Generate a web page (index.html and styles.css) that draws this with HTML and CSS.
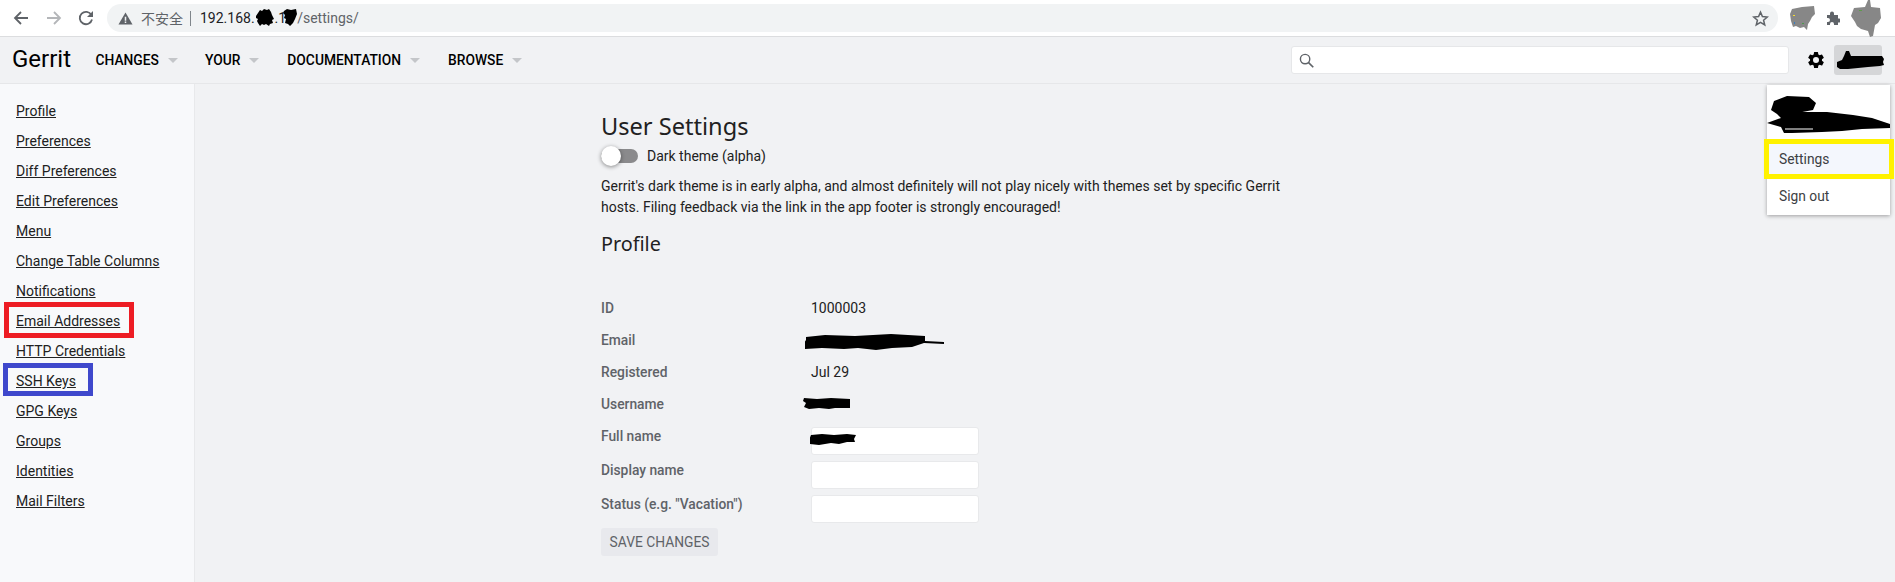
FILE: index.html
```html
<!DOCTYPE html>
<html lang="en">
<head>
<meta charset="utf-8">
<title>Gerrit Settings</title>
<link rel="stylesheet" href="styles.css">
</head>
<body>
<div class="browser-bar">
  <svg class="bicon" viewBox="0 0 16 16"><path d="M15 8H2.500M8 2 2 8l6 6" fill="none" stroke="#5f6368" stroke-width="1.800"/></svg>
  <svg class="bicon fwd" viewBox="0 0 16 16"><path d="M1 8h12.500M8 2l6 6-6 6" fill="none" stroke="#b4b6b9" stroke-width="1.800"/></svg>
  <svg class="bicon reload" viewBox="0 0 16 16"><path d="M13.400 5A6.200 6.200 0 1 0 14 9.500" fill="none" stroke="#5f6368" stroke-width="1.800"/><path d="M15 1v6H9z" fill="#5f6368"/></svg>
  <div class="omnibox">
    <svg class="warn" viewBox="0 0 16 16"><path d="M8 1.500 15.500 14.500H.5z" fill="#5f6368"/><path d="M7.200 6h1.600v4.400H7.200zM7.200 11.200h1.600v1.600H7.200z" fill="#f1f3f4"/></svg>
    <span class="insecure">不安全</span>
    <span class="sep"></span>
    <span class="url">192.168.<svg class="url-blob one" viewBox="0 0 20 20"><path d="M1 8 3 5l2-3 2 1 2-2 3 1 2-1 2 3 1 3 2 4-2 1 1 3-3 1-1 2-3-2-2 1-2-1-2 2-2-3-1-2 1-2-2-1z"/></svg>.1<svg class="url-blob two" viewBox="0 0 14 20"><path d="M1 3 4 1l4 1 5-1 1 5-2 5-2 4-3 3-2-2-3-1 1-4-2-1 1-3-2-2z"/></svg><span class="url-path">/settings/</span></span>
    <svg class="star" viewBox="0 0 16 16"><path d="m8 2 1.800 4.200 4.600.4-3.500 3 1.100 4.500L8 11.700l-4 2.400 1.100-4.500-3.500-3 4.600-.4z" fill="none" stroke="#5f6368" stroke-width="1.400"/></svg>
  </div>
  <svg class="ext-a" viewBox="0 0 25 24"><path d="M2 3 12 1l12-1 1 8-3 3-2 4-2 3-1 6-3-3-4 1-4-2-3 1-2-6-1-7z" fill="#878787"/><path d="M3 9h2v1H3z" fill="#f5dc30"/><path d="M4 16h1v2H4z" fill="#3a7fc0"/><path d="M12 17h2v1h-2z" fill="#4c9a4c"/></svg>
  <svg class="puzzle" viewBox="0 0 14 14"><path d="M1 4h3V2.500a2 2 0 0 1 4 0V4h4v3.500h1a2 2 0 0 1 0 4h-1V14H8v-1a2 2 0 0 0-4 0v1H1v-3h1a2 2 0 0 0 0-4H1z" fill="#5f6368"/></svg>
  <svg class="ext-b" viewBox="0 0 30 37"><path d="M3 8 14 7l3-7h2l1 7 9 1 1 10-3 5-3 2-2 11-3 1-2-6-7-2-4-3-2-4-4-6z" fill="#878787"/><path d="M8 10h3v1H8z" fill="#5e9a4c"/></svg>
</div>

<header class="app-header">
  <span class="logo">Gerrit</span>
  <nav class="main-nav">
    <span class="nav-item changes">CHANGES<i class="caret"></i></span>
    <span class="nav-item your">YOUR<i class="caret"></i></span>
    <span class="nav-item docs">DOCUMENTATION<i class="caret"></i></span>
    <span class="nav-item browse">BROWSE<i class="caret"></i></span>
  </nav>
  <div class="search">
    <svg class="search-icon" viewBox="0 0 16 16"><circle cx="6.500" cy="6.500" r="5" fill="none" stroke="#5f6368" stroke-width="1.500"/><path d="m10.200 10.200 5 5" stroke="#5f6368" stroke-width="1.800"/></svg>
  </div>
  <svg class="gear" viewBox="0 0 24 24"><path d="M19.140 12.940a7.140 7.140 0 0 0 0-1.880l2.030-1.580a.5.5 0 0 0 .12-.61l-1.920-3.320a.5.5 0 0 0-.59-.22l-2.390.96a7 7 0 0 0-1.620-.94l-.36-2.540a.5.500 0 0 0-.48-.41h-3.840a.5.500 0 0 0-.47.410l-.36 2.540a7.200 7.200 0 0 0-1.620.94l-2.390-.96a.5.500 0 0 0-.59.220L2.740 8.870a.5.5 0 0 0 .12.610l2.030 1.580a7.400 7.400 0 0 0 0 1.880l-2.030 1.580a.5.5 0 0 0-.12.610l1.920 3.320c.12.220.37.29.59.22l2.390-.96c.5.380 1.040.7 1.620.94l.36 2.540c.05.240.24.410.47.410h3.840c.24 0 .44-.17.470-.41l.36-2.540a7 7 0 0 0 1.620-.94l2.390.96c.22.080.47 0 .59-.22l1.920-3.320a.5.5 0 0 0-.12-.61zM12 15.600a3.600 3.600 0 1 1 0-7.200 3.600 3.600 0 0 1 0 7.200z" fill="#000"/></svg>
  <div class="avatar-box">
    <svg class="avatar-blob" viewBox="0 0 47 19"><path d="M0 11 5 9l2-4 2-5h3l2 5 15 0 16 0 2 3-1 3 1 3-4 1-12 1-10 1-10 1-8 0-3-2-2-2z"/></svg>
  </div>
</header>

<div class="page">
  <aside class="sidebar">
    <ul class="side-list">
      <li><a>Profile</a></li>
      <li><a>Preferences</a></li>
      <li><a>Diff Preferences</a></li>
      <li><a>Edit Preferences</a></li>
      <li><a>Menu</a></li>
      <li><a>Change Table Columns</a></li>
      <li><a>Notifications</a></li>
      <li class="marked"><a>Email Addresses</a><span class="mark mark-red"></span></li>
      <li><a>HTTP Credentials</a></li>
      <li class="marked"><a>SSH Keys</a><span class="mark mark-blue"></span></li>
      <li><a>GPG Keys</a></li>
      <li><a>Groups</a></li>
      <li><a>Identities</a></li>
      <li><a>Mail Filters</a></li>
    </ul>
  </aside>

  <main class="content">
    <h1 class="title">User Settings</h1>
    <div class="theme-row">
      <span class="toggle"><span class="thumb"></span></span>
      <span class="toggle-label">Dark theme (alpha)</span>
    </div>
    <p class="note">Gerrit's dark theme is in early alpha, and almost definitely will not play nicely with themes set by specific Gerrit hosts. Filing feedback via the link in the app footer is strongly encouraged!</p>
    <h2 class="title section">Profile</h2>

    <div class="profile-grid">
      <span class="label">ID</span><span class="value">1000003</span>
      <span class="label">Email</span>
      <span class="value"><svg class="blob blob-email" viewBox="0 0 140 17"><path d="M1 3 20 1l30 1 36-2 34 2 0 5 19 1v2l-20-1-12 4-20 1-16 2-18-2-14 1-22-1-17 1-1-6 2-3z"/></svg></span>
      <span class="label">Registered</span><span class="value">Jul 29</span>
      <span class="label">Username</span>
      <span class="value"><svg class="blob blob-user" viewBox="0 0 48 13"><path d="M1 1 14 2l14-1 19 1 0 9-15 0-6 1-10-1-10 1-5-2 2-4-3-2z"/></svg></span>
      <span class="label top">Full name</span>
      <span class="field"><input class="input" type="text"><svg class="blob blob-name" viewBox="0 0 47 12"><path d="M1 2 12 1l12 1 13-1 9 1-2 4 1 3-8 0-8 2-8-1-12 2-9-1-1-4z"/></svg></span>
      <span class="label top">Display name</span>
      <span class="field"><input class="input" type="text"></span>
      <span class="label top">Status (e.g. "Vacation")</span>
      <span class="field"><input class="input" type="text"></span>
    </div>
    <button class="save" type="button">SAVE CHANGES</button>
  </main>
</div>

<div class="account-menu">
  <div class="account-head">
    <svg class="blob-account" viewBox="0 0 124 50"><path d="M7 16 20 11l22 1 7 6-3 7-16 3 5-1 25 0 26 3 19 3 18 6v4l-28 1-20 2-20 1-30 1-8 0-3-6-14-4 14-5-4-4-6-4z"/><path d="M18 44h28" stroke="#fff" fill="none"/></svg>
  </div>
  <div class="menu-item active">Settings</div>
  <div class="menu-item">Sign out</div>
</div>
</body>
</html>
```

FILE: styles.css
```css
* { box-sizing: border-box; }
html, body { height: 100%; }
body {
  margin: 0;
  display: flex;
  flex-direction: column;
  overflow: hidden;
  position: relative;
  font-family: Roboto, "Noto Sans CJK SC", sans-serif;
  font-size: 14px;
  color: #212121;
  background: #f1f2f4;
}

/* browser chrome */
.browser-bar {
  flex: none;
  height: 37px;
  display: flex;
  align-items: center;
  padding-left: 13px;
  background: #fff;
  border-bottom: 1px solid #dcdddf;
}
.bicon { width: 16px; height: 16px; flex: none; }
.fwd { margin-left: 17px; }
.reload { margin-left: 16px; }
.omnibox {
  flex: none;
  width: 1671px;
  height: 28px;
  margin-left: 13px;
  border-radius: 14px;
  background: #f1f3f4;
  display: flex;
  align-items: center;
  padding-left: 11px;
}
.warn { width: 15px; height: 15px; flex: none; }
.insecure { margin-left: 8px; font-size: 14px; color: #5f6368; }
.sep { width: 1px; height: 15px; margin: 0 9px 0 7px; background: #80868b; }
.url { color: #202124; display: flex; align-items: center; font-size: 14px; }
.url-blob { fill: #000; height: 20px; }
.url-blob.one { width: 20px; }
.url-blob.two { width: 14px; margin-left: -3px; }
.url-path { color: #5f6368; }
.star { width: 17px; height: 17px; margin-left: auto; margin-right: 9px; }
.ext-a { width: 25px; height: 24px; margin-left: 12px; flex: none; }
.puzzle { width: 14px; height: 14px; margin-left: 11px; flex: none; }
.ext-b { width: 30px; height: 37px; margin-left: 11px; flex: none; }

/* app header */
.app-header {
  flex: none;
  height: 47px;
  display: flex;
  align-items: center;
  background: #f1f2f4;
  border-bottom: 1px solid #e6e7e9;
  padding-left: 12px;
}
.logo { font-size: 24px; color: #000; width: 83.500px; position: relative; top: -1px; }
.main-nav { display: flex; align-items: center; }
.nav-item {
  font-size: 13.800px;
  font-weight: 500;
  color: #000;
  display: flex;
  align-items: center;
}
.caret {
  width: 0;
  height: 0;
  margin-left: 9px;
  border-left: 5px solid transparent;
  border-right: 5px solid transparent;
  border-top: 5px solid #c4c6c9;
}
.your { margin-left: 27px; }
.docs { margin-left: 28px; }
.browse { margin-left: 28px; }
.search {
  width: 498px;
  height: 28px;
  margin-left: auto;
  background: #fff;
  border: 1px solid #e6e7e9;
  border-radius: 3px;
  display: flex;
  align-items: center;
  padding-left: 7px;
}
.search-icon { width: 15px; height: 15px; }
.gear { width: 20px; height: 20px; margin-left: 17px; flex: none; }
.avatar-box {
  width: 48px;
  height: 30px;
  margin-left: 8px;
  margin-right: 13px;
  background: #d5d6d8;
  border-radius: 3px;
  display: flex;
  align-items: center;
  padding-left: 3px;
}
.avatar-blob { width: 47px; height: 19px; fill: #000; flex: none; }

/* page */
.page { flex: 1; display: flex; min-height: 0; }
.sidebar {
  flex: none;
  width: 195px;
  background: #f8f9fb;
  border-right: 1px solid #e8e9eb;
}
.side-list { list-style: none; margin: 0; padding: 12px 0 0 16px; }
.side-list li { height: 30px; line-height: 30px; position: relative; }
.side-list a { color: #212121; text-decoration: underline; font-size: 14px; }
.mark { position: absolute; border-style: solid; border-width: 5px; pointer-events: none; }
.mark-red { border-color: #ed1c24; left: -12px; top: -4px; width: 130px; height: 36px; }
.mark-blue { border-color: #3f48cc; left: -13px; top: -3px; width: 90px; height: 33px; }

.content { flex: 1; padding: 28px 0 0 406px; }
.title {
  margin: 0;
  font-family: "Noto Sans", sans-serif;
  font-weight: 400;
  font-size: 23.600px;
  line-height: 28px;
  color: #212121;
}
.theme-row { display: flex; align-items: center; height: 20px; margin-top: 6px; }
.toggle {
  width: 37px;
  height: 14px;
  border-radius: 7px;
  background: #8a8a8c;
  position: relative;
  flex: none;
}
.thumb {
  position: absolute;
  left: 0;
  top: -3px;
  width: 20px;
  height: 20px;
  border-radius: 50%;
  background: #fff;
  box-shadow: 0 1px 4px rgba(0, 0, 0, .45);
}
.toggle-label { margin-left: 9px; font-size: 14px; }
.note { width: 700px; margin: 10px 0 0; font-size: 14px; line-height: 21px; }
.section { font-size: 19.800px; margin-top: 12px; }

.profile-grid {
  display: grid;
  grid-template-columns: 210px 168px;
  grid-template-rows: 32px 32px 32px 40px 34px 34px 33px;
  margin-top: 33px;
  align-items: start;
}
.label { font-weight: 500; color: #5f6368; font-size: 13.800px; line-height: 34px; }
.value { font-size: 14px; line-height: 34px; height: 32px; display: block; position: relative; }
.label.top { line-height: 18px; }
.field { position: relative; display: block; height: 28px; }
.input {
  display: block;
  width: 168px;
  height: 28px;
  margin: 0;
  border: 1px solid #e8e9eb;
  border-radius: 3px;
  background: #fff;
}
.blob { position: absolute; fill: #000; }
.blob-email { width: 140px; height: 17px; left: -6px; top: 11px; }
.blob-user { width: 48px; height: 13px; left: -8px; top: 10px; }
.blob-name { width: 47px; height: 14px; left: -1px; top: 5px; }
.save {
  display: block;
  width: 117px;
  height: 28px;
  padding: 0;
  border: 0;
  border-radius: 3px;
  background: #e8e9ed;
  color: #5f6368;
  font: 400 13.800px Roboto, sans-serif;
}

/* overlay menu */
.account-menu {
  position: absolute;
  top: 85px;
  left: 1767px;
  width: 123px;
  height: 130px;
  background: #fff;
  box-shadow: 0 1px 4px rgba(0, 0, 0, .35);
}
.account-head { height: 59px; position: relative; }
.blob-account { position: absolute; left: 0; top: 0; width: 124px; height: 50px; fill: #000; }
.menu-item { height: 36px; line-height: 34px; padding-left: 12px; font-size: 13.800px; color: #3c4043; }
.menu-item.active {
  height: 40px;
  line-height: 31px;
  width: 130px;
  margin: -5px 0 0 -3px;
  padding-left: 10px;
  background: #f4f7fd;
  border: 5px solid #fff200;
  position: relative;
}
```
